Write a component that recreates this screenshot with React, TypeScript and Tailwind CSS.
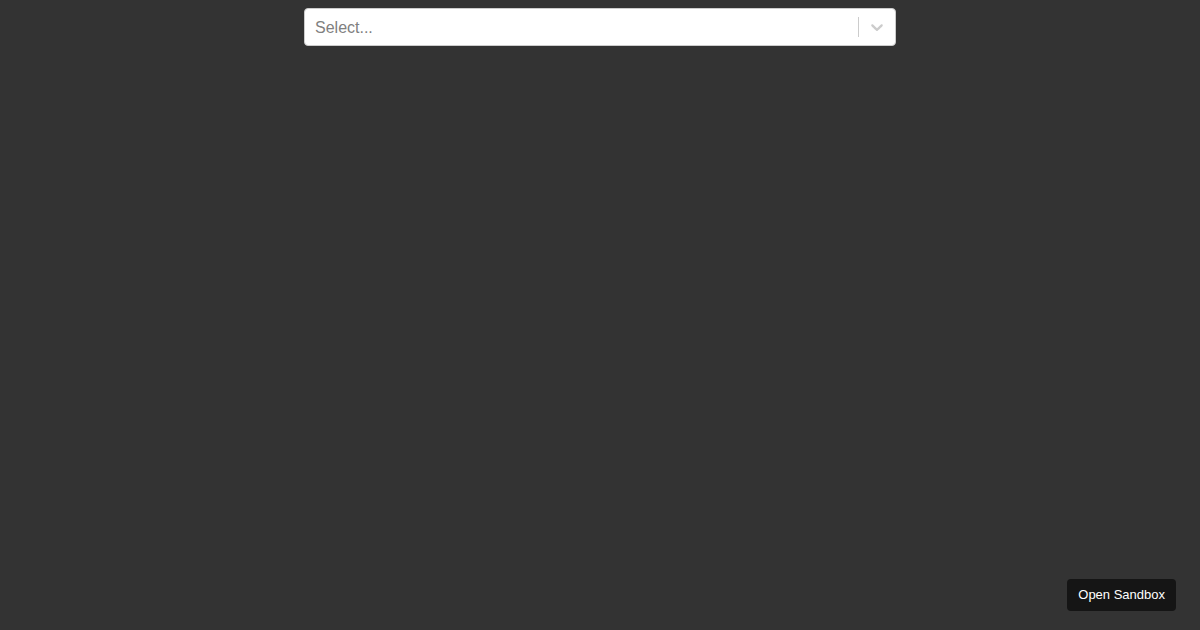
import { useState } from 'react';

const Chevron = () => (
  <svg height="20" width="20" viewBox="0 0 20 20" aria-hidden="true" className="fill-current">
    <path d="M4.516 7.548c0.436-0.446 1.043-0.481 1.576 0l3.908 3.747 3.908-3.747c0.533-0.481 1.141-0.446 1.574 0 0.436 0.445 0.408 1.197 0 1.615-0.406 0.418-4.695 4.502-4.695 4.502-0.217 0.223-0.502 0.335-0.787 0.335s-0.57-0.112-0.789-0.335c0 0-4.287-4.084-4.695-4.502s-0.436-1.17 0-1.615z" />
  </svg>
);

export default function App() {
  const [open, setOpen] = useState(false);

  return (
    <div className="relative h-[630px] w-full bg-[#333333] font-['Liberation_Sans',Arial,sans-serif]">
      <div className="mx-auto w-[592px] pt-2">
        {/* Select control */}
        <div
          className="flex min-h-[38px] cursor-default items-center justify-between rounded border border-[#cccccc] bg-white"
          onClick={() => setOpen(!open)}
        >
          <div className="flex flex-1 items-center px-2 pt-1 pb-0.5">
            <div className="mx-0.5 text-base text-[#808080]">Select...</div>
          </div>
          <div className="flex shrink-0 items-center self-stretch">
            <span className="my-2 w-px self-stretch bg-[#cccccc]" />
            <div className="flex p-2 text-[#cccccc]">
              <Chevron />
            </div>
          </div>
        </div>
      </div>

      {/* Sandbox button */}
      <button className="absolute bottom-[19px] right-6 flex h-8 items-center rounded bg-[#151515] px-[11px] text-[13px] text-white">
        Open Sandbox
      </button>
    </div>
  );
}
